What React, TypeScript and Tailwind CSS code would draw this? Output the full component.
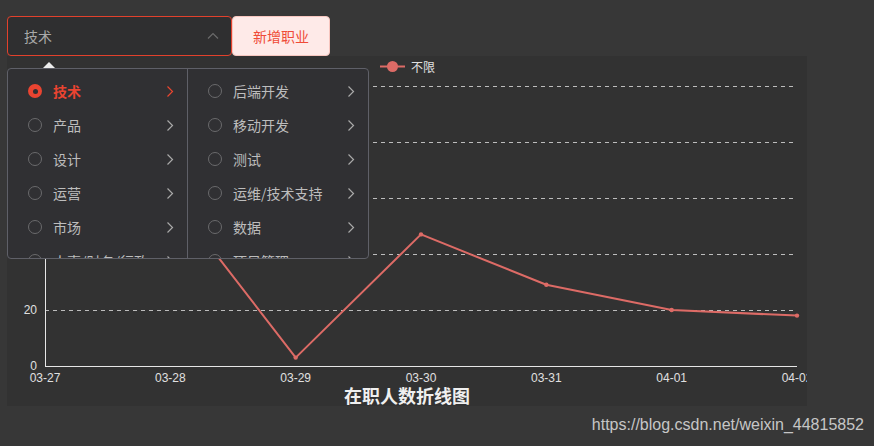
import React from "react";

const left = ["技术", "产品", "设计", "运营", "市场", "人事/财务/行政"];
const right = ["后端开发", "移动开发", "测试", "运维/技术支持", "数据", "项目管理"];

const labels = ["03-27", "03-28", "03-29", "03-30", "03-31", "04-01", "04-02"];
const values = [50, 61, 3, 47, 29, 20, 18];

// svg coords relative to panel (page x-7, y-56)
const X0 = 38;
const X1 = 790;
const Y0 = 310;
const step = (X1 - X0) / 6;
const yOf = (v: number) => Y0 - v * 2.8;

function Chevron({ red }: { red?: boolean }) {
  return (
    <svg width="8" height="13" viewBox="0 0 8 13" className="shrink-0">
      <path d="M1.5 1.5 L6.5 6.5 L1.5 11.5" fill="none" stroke={red ? "#e9452f" : "#a8a8a8"} strokeWidth="1.2" />
    </svg>
  );
}

function Row({ text, selected }: { text: string; selected?: boolean }) {
  return (
    <div className="h-[34px] shrink-0 flex items-center pl-[20px] pr-[13px]">
      {selected ? (
        <span className="w-[14px] h-[14px] rounded-full bg-[#ea4431] flex items-center justify-center shrink-0">
          <span className="w-[5px] h-[5px] rounded-full bg-[#303033]" />
        </span>
      ) : (
        <span className="w-[14px] h-[14px] rounded-full border border-[#6a6a6c] shrink-0" />
      )}
      <span
        className={
          "ml-[11px] flex-1 text-[14px] leading-none whitespace-nowrap " +
          (selected ? "text-[#ea4431] font-bold" : "text-[#bdbdbd]")
        }
      >
        {text}
      </span>
      <Chevron red={selected} />
    </div>
  );
}

export default function App() {
  const pts = values.map((v, i) => [X0 + i * step, yOf(v)] as const);
  const d = pts.map((p, i) => (i === 0 ? "M" : "L") + p[0].toFixed(1) + " " + p[1].toFixed(1)).join(" ");
  return (
    <div
      className="relative w-[874px] h-[446px] overflow-hidden bg-[#373737] pl-[7px] pt-[16px]"
      style={{ fontFamily: '"Liberation Sans", "Noto Sans CJK SC", sans-serif' }}
    >
      <div className="flex h-[40px]">
        <div className="w-[225px] h-[40px] rounded-[4px] border border-[#e2412c] bg-[#2f2f30] flex items-center pl-[16px] pr-[12px]">
          <span className="flex-1 text-[14px] text-[#a8a8a8]" style={{ fontFamily: '"Noto Sans CJK SC", sans-serif' }}>
            技术
          </span>
          <svg width="12" height="8" viewBox="0 0 12 8">
            <path d="M1 6.5 L6 1.5 L11 6.5" fill="none" stroke="#6b6b6b" strokeWidth="1.2" />
          </svg>
        </div>
        <div
          className="w-[98px] h-[40px] rounded-[4px] border border-[#f7c6bf] bg-[#feeae8] flex items-center justify-center text-[14px] text-[#ef4b37]"
          style={{ fontFamily: '"Noto Sans CJK SC", sans-serif' }}
        >
          新增职业
        </div>
      </div>

      <div className="w-[800px] h-[350px] bg-[#323232]">
        <svg width="800" height="350" viewBox="0 0 800 350">
          {[30, 86, 142, 198, 254].map((y) => (
            <line key={y} x1={X0} x2={X1} y1={y + 0.5} y2={y + 0.5} stroke="#bdbdbd" strokeWidth="1" strokeDasharray="4 4" />
          ))}
          <line x1={X0 + 0.5} x2={X0 + 0.5} y1={30} y2={Y0} stroke="#e6e6e6" strokeWidth="1" />
          <line x1={X0} x2={X1} y1={Y0 + 0.5} y2={Y0 + 0.5} stroke="#e6e6e6" strokeWidth="1" />
          {[0, 20, 40, 60, 80, 100].map((v) => (
            <text key={v} x={X0 - 8} y={yOf(v)} textAnchor="end" dominantBaseline="central" fontSize="12" fill="#e0e0e0">
              {v}
            </text>
          ))}
          {labels.map((l, i) => (
            <text key={l} x={X0 + i * step} y={322} textAnchor="middle" dominantBaseline="central" fontSize="12" fill="#e0e0e0">
              {l}
            </text>
          ))}
          <path d={d} fill="none" stroke="#dd6b66" strokeWidth="2" strokeLinejoin="round" />
          {pts.map((p, i) => (
            <circle key={i} cx={p[0]} cy={p[1]} r="2.2" fill="#dd6b66" />
          ))}
          <line x1={373} x2={398} y1={10.5} y2={10.5} stroke="#dd6b66" strokeWidth="2" />
          <circle cx={385.5} cy={10.5} r="5.5" fill="#dd6b66" />
          <text x={404} y={10} dominantBaseline="central" fontSize="12" fill="#e0e0e0" fontFamily='"Noto Sans CJK SC", sans-serif'>
            不限
          </text>
          <text
            x={400}
            y={339}
            textAnchor="middle"
            dominantBaseline="central"
            fontSize="18"
            fontWeight="bold"
            fill="#efefef"
            fontFamily='"Noto Sans CJK SC", sans-serif'
          >
            在职人数折线图
          </text>
        </svg>
      </div>

      <div className="flex justify-end pr-[10px] pt-[10px]">
        <span className="text-[16px] leading-[18px] text-[#c6c6c6]">https://blog.csdn.net/weixin_44815852</span>
      </div>

      {/* dropdown */}
      <div className="absolute left-[43px] top-[62px] w-0 h-0 border-l-[6px] border-r-[6px] border-b-[6px] border-l-transparent border-r-transparent border-b-[#ededed]" />
      <div
        className="absolute left-[7px] top-[68px] w-[362px] h-[191px] rounded-[4px] border border-[#5f6068] bg-[#303033] flex overflow-hidden"
        style={{ fontFamily: '"Noto Sans CJK SC", sans-serif' }}
      >
        <div className="w-[180px] h-full flex flex-col pt-[5px] border-r border-[#5f6068]">
          {left.map((t, i) => (
            <Row key={t} text={t} selected={i === 0} />
          ))}
        </div>
        <div className="flex-1 h-full flex flex-col pt-[5px]">
          {right.map((t) => (
            <Row key={t} text={t} />
          ))}
        </div>
      </div>
    </div>
  );
}
